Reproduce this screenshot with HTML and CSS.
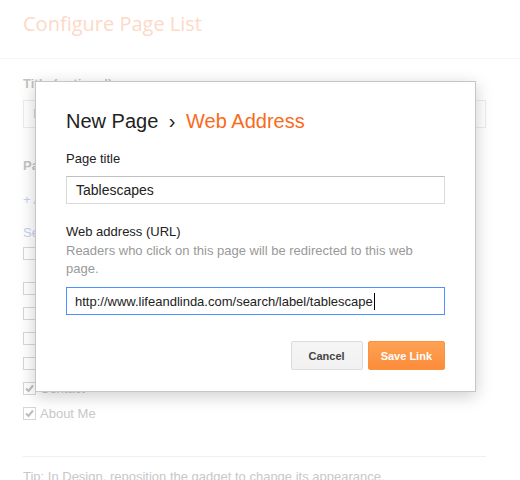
FILE: index.html
```html
<!DOCTYPE html>
<html>
<head>
<meta charset="utf-8">
<link rel="stylesheet" href="styles.css">
</head>
<body>
<div class="page">
  <header class="head">
    <h1 class="head-title">Configure Page List</h1>
  </header>
  <main class="content">
    <div class="field-label">Title (optional):</div>
    <div class="bg-input">Pages</div>
    <div class="section-label">Pages to show:</div>
    <div class="link add">+ Add external link</div>
    <div class="link">Select all</div>
    <ul class="pages">
      <li class="row first"><span class="cb"></span><span class="cb-label">Home</span></li>
      <li class="row"><span class="cb"></span><span class="cb-label">Recipes</span></li>
      <li class="row"><span class="cb"></span><span class="cb-label">Tablescapes</span></li>
      <li class="row"><span class="cb"></span><span class="cb-label">Travel</span></li>
      <li class="row"><span class="cb"></span><span class="cb-label">Garden</span></li>
      <li class="row"><span class="cb checked"><svg viewBox="0 0 13 13" width="13" height="13"><polyline points="3,6.5 5.5,9 10,3.5" fill="none" stroke="#bdbdbd" stroke-width="2"/></svg></span><span class="cb-label">Contact</span></li>
      <li class="row"><span class="cb checked"><svg viewBox="0 0 13 13" width="13" height="13"><polyline points="3,6.5 5.5,9 10,3.5" fill="none" stroke="#bdbdbd" stroke-width="2"/></svg></span><span class="cb-label">About Me</span></li>
    </ul>
    <div class="rule"></div>
    <p class="tip">Tip: In Design, reposition the gadget to change its appearance.</p>
  </main>

  <div class="modal">
    <h2 class="modal-title">New Page <span class="sep">&rsaquo;</span> <span class="accent">Web Address</span></h2>
    <div class="label">Page title</div>
    <div class="input title-input">Tablescapes</div>
    <div class="label url-label">Web address (URL)</div>
    <div class="desc">Readers who click on this page will be redirected to this web page.</div>
    <div class="input url-input">http://www.lifeandlinda.com/search/label/tablescape<span class="caret"></span></div>
    <div class="actions">
      <button class="btn cancel">Cancel</button>
      <button class="btn save">Save Link</button>
    </div>
  </div>
</div>
</body>
</html>
```

FILE: styles.css
```css
html, body {
  margin: 0;
  padding: 0;
  background: #fff;
}
body {
  font-family: "Liberation Sans", Arial, sans-serif;
  width: 520px;
  height: 480px;
  overflow: hidden;
}
.page {
  position: relative;
  width: 520px;
  height: 480px;
  overflow: hidden;
}
.head {
  padding: 10px 23px 20px;
  border-bottom: 1px solid #f5f5f5;
}
.head-title {
  margin: 0;
  font-family: "Open Sans", sans-serif;
  font-weight: normal;
  font-size: 20px;
  line-height: 28px;
  color: #fdd9c7;
}
.content {
  padding: 0 34px 0 23px;
  font-size: 13px;
  line-height: 16px;
  color: #c8c8c8;
}
.field-label {
  margin-top: 17px;
  font-weight: bold;
  color: #c4c4c4;
}
.bg-input {
  margin-top: 8px;
  height: 26px;
  border: 1px solid #ececec;
  padding: 0 9px;
  line-height: 26px;
  color: #d0d0d0;
}
.section-label {
  margin-top: 30px;
  font-weight: bold;
  color: #c4c4c4;
}
.link {
  color: #c3d2f0;
}
.link.add {
  margin-top: 18px;
}
.link + .link {
  margin-top: 17px;
}
.pages {
  list-style: none;
  margin: 0;
  padding: 0;
}
.row {
  display: flex;
  align-items: center;
  height: 25px;
}
.row.first {
  margin-bottom: 10px;
}
.cb {
  box-sizing: border-box;
  width: 13px;
  height: 13px;
  border: 1px solid #d6d6d6;
  background: #fff;
  margin-right: 4px;
  display: flex;
  align-items: center;
  justify-content: center;
}
.cb svg {
  display: block;
  margin: -1px;
}
.cb-label {
  color: #c8c8c8;
}
.rule {
  margin-top: 30px;
  border-top: 1px solid #f0f0ea;
}
.tip {
  margin: 12px 0 0;
  color: #c8c8c8;
}

/* Modal */
.modal {
  position: absolute;
  left: 35px;
  top: 81px;
  width: 379px;
  padding: 27px 30px 21px;
  background: #fff;
  border: 1px solid #c6c6c6;
  box-shadow: 0 4px 16px rgba(0, 0, 0, 0.2);
  color: #222;
}
.modal-title {
  margin: 0;
  font-size: 20px;
  font-weight: normal;
  line-height: 24px;
  color: #222;
}
.sep {
  padding: 0 5px;
}
.accent {
  color: #f96a1c;
}
.label {
  margin-top: 18px;
  font-size: 13px;
  line-height: 16px;
  color: #222;
}
.url-label {
  margin-top: 20px;
}
.input {
  box-sizing: border-box;
  margin-top: 9px;
  height: 28px;
  border: 1px solid #d9d9d9;
  border-top-color: #c0c0c0;
  padding: 0 8px;
  display: flex;
  align-items: center;
  color: #222;
}
.title-input {
  font-size: 14px;
  padding-left: 9px;
}
.url-input {
  font-size: 13px;
  border-color: #4d90fe;
}
.caret {
  display: inline-block;
  width: 0;
  height: 17px;
  border-left: 1px solid #000;
  margin-left: 1px;
}
.desc {
  margin-top: 2px;
  font-size: 13px;
  line-height: 18px;
  color: #999;
}
.actions {
  margin-top: 26px;
  display: flex;
  justify-content: flex-end;
  gap: 5px;
}
.btn {
  font-family: "Liberation Sans", Arial, sans-serif;
  font-size: 11px;
  font-weight: bold;
  height: 29px;
  border-radius: 2px;
  cursor: pointer;
}
.cancel {
  padding: 0 17px;
  color: #444;
  border: 1px solid #dcdcdc;
  background: linear-gradient(#f5f5f5, #f1f1f1);
}
.save {
  padding: 0 12px;
  color: #fff;
  border: 1px solid #f9933f;
  background: linear-gradient(#fea255, #fb8c3a);
}
```
